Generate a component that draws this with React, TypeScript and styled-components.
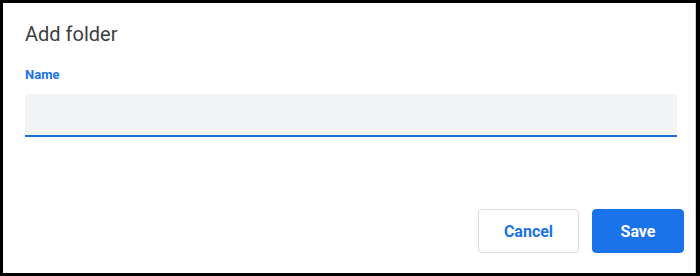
import React from "react";
import styled, { createGlobalStyle } from "styled-components";

const Global = createGlobalStyle`
  html, body { margin: 0; padding: 0; background: #000; }
  * { box-sizing: border-box; }
  body { font-family: Roboto, "Liberation Sans", Arial, sans-serif; }
`;

const Frame = styled.div`
  width: 700px;
  height: 276px;
  background: #000;
  padding: 3px 4px 3px 3px;
  display: flex;
`;

const Panel = styled.div`
  flex: 1;
  background: #fff;
  border-right: 1px solid #cfcfcf;
  display: flex;
  flex-direction: column;
`;

const Title = styled.h2`
  margin: 19px 0 0 22px;
  font-size: 20px;
  line-height: 24px;
  font-weight: 400;
  color: #3c4043;
`;

const Field = styled.div`
  margin: 21px 18px 0 22px;
  display: flex;
  flex-direction: column;
  gap: 11px;
`;

const Label = styled.label`
  font-size: 13px;
  line-height: 16px;
  font-weight: 700;
  color: #1a73e8;
`;

const Input = styled.input`
  height: 43px;
  border: none;
  border-bottom: 2px solid #1a6ed8;
  border-radius: 4px 4px 0 0;
  background: #f1f3f4;
  outline: none;
  padding: 0 12px;
  font: inherit;
  font-size: 15px;
  color: #202124;
`;

const Actions = styled.div`
  margin-top: auto;
  padding: 0 11px 20px 0;
  display: flex;
  justify-content: flex-end;
  gap: 13px;
`;

const Button = styled.button<{ $primary?: boolean }>`
  height: 44px;
  width: ${(p) => (p.$primary ? "92px" : "101px")};
  border-radius: 4px;
  font-family: Roboto, "Liberation Sans", Arial, sans-serif;
  font-size: 16px;
  font-weight: 700;
  cursor: pointer;
  border: 1px solid ${(p) => (p.$primary ? "#1a73e8" : "#dadce0")};
  background: ${(p) => (p.$primary ? "#1a73e8" : "#fff")};
  color: ${(p) => (p.$primary ? "#fff" : "#1a73e8")};
`;

export default function App() {
  return (
    <>
      <Global />
      <Frame>
        <Panel>
          <Title>Add folder</Title>
          <Field>
            <Label htmlFor="name">Name</Label>
            <Input id="name" />
          </Field>
          <Actions>
            <Button>Cancel</Button>
            <Button $primary>Save</Button>
          </Actions>
        </Panel>
      </Frame>
    </>
  );
}
